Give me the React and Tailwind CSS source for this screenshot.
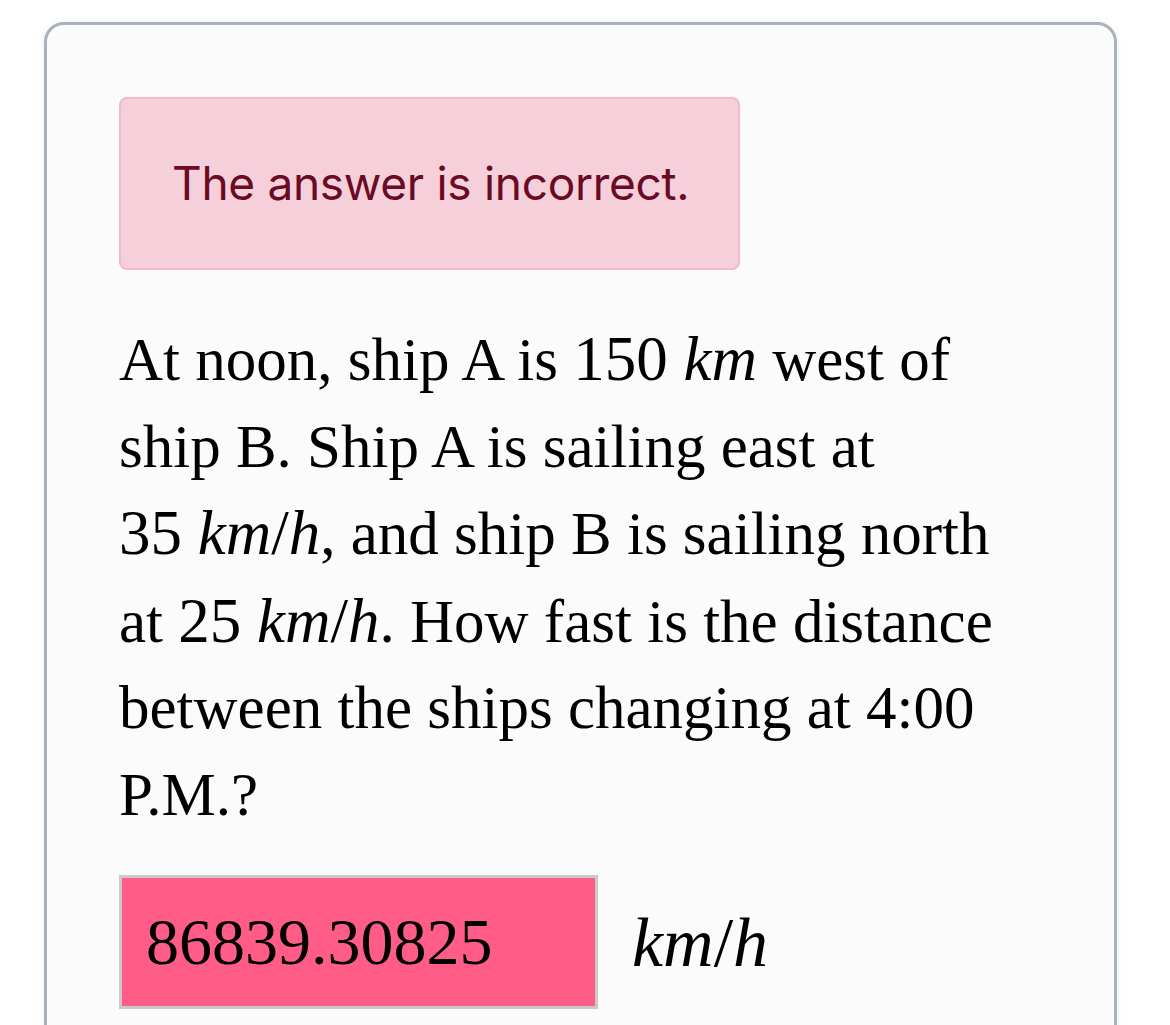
import React from "react";

// inline math, kept on one line like the rendered formula
const M = ({ children }) => (
  <span className="whitespace-nowrap text-[63px]">{children}</span>
);

export default function App() {
  return (
    <div className="min-h-screen bg-white px-[44px] pt-[22px]">
      <div className="w-[1073px] min-h-[1100px] rounded-[20px] border-[3px] border-[#a9b2bc] bg-[#fbfbfb] px-[72px] pt-[72px] shadow-[0_0_6px_rgba(0,0,0,0.08)]">
        {/* Feedback */}
        <div className="flex h-[173px] w-[621px] items-center rounded-[8px] border-2 border-[#f1b9c9] bg-[#f5cfd9] pl-[51px] font-['Inter','Noto_Sans',sans-serif] text-[46px] tracking-[-0.3px] text-[#6b0a24]">
          The answer is incorrect.
        </div>

        {/* Question */}
        <p className="mt-[46px] w-[900px] font-['Liberation_Serif',serif] text-[61px] leading-[86.5px] text-black">
          At noon, ship A is <M>150 <i>km</i></M> west of ship B. Ship A is
          sailing east at{" "}
          <M>
            35 <i>km</i>/<i>h</i>
          </M>
          , and ship B is sailing north at{" "}
          <M>
            25 <i>km</i>/<i>h</i>
          </M>
          . How fast is the distance between the ships changing at 4:00 P.M.?
        </p>

        {/* Answer */}
        <div className="mt-[37px] flex items-center gap-[34px]">
          <input
            readOnly
            value="86839.30825"
            className="h-[134px] w-[479px] border-[3px] border-[#c9c9c9] bg-[#ff5c87] pl-[24px] font-['Liberation_Serif',serif] text-[66px] text-black outline-none"
          />
          <span className="font-['Liberation_Serif',serif] text-[70px] text-black">
            <i>km</i>/<i>h</i>
          </span>
        </div>
      </div>
    </div>
  );
}
